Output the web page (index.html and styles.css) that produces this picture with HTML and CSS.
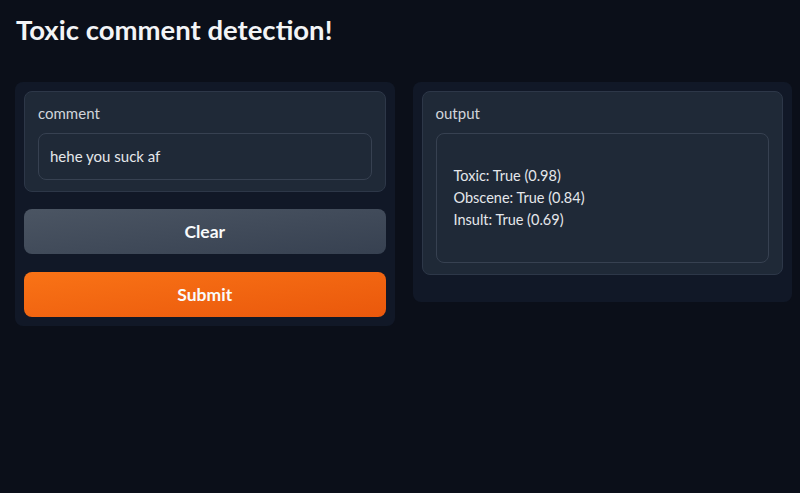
FILE: index.html
```html
<!DOCTYPE html>
<html lang="en">
  <head>
    <meta charset="UTF-8" />
    <title>Toxic comment detection!</title>
    <link rel="stylesheet" href="styles.css">
  </head>
  <body>
    <h1>Toxic comment detection!</h1>

    <div class="row">
      <div class="panel">
        <div class="block">
          <label class="block-label">comment</label>
          <div class="textbox">hehe you suck af</div>
        </div>
        <button class="btn btn-clear">Clear</button>
        <button class="btn btn-submit">Submit</button>
      </div>

      <div class="panel panel-right">
        <div class="block">
          <label class="block-label">output</label>
          <div class="output">
            <p>Toxic: True (0.98)</p>
            <p>Obscene: True (0.84)</p>
            <p>Insult: True (0.69)</p>
          </div>
        </div>
      </div>
    </div>
  </body>
</html>
```

FILE: styles.css
```css
body {
  margin: 0;
  padding: 0 8px 0 15px;
  background: #0b0f19;
  color: #e5e7eb;
  font-family: Lato, "Open Sans", sans-serif;
}
h1 {
  margin: 0;
  padding: 13px 0 0 1px;
  height: 82px;
  box-sizing: border-box;
  font-size: 27.5px;
  font-weight: 700;
  color: #f3f4f6;
}
.row {
  display: flex;
  gap: 18px;
  align-items: flex-start;
}
.panel {
  flex: 1;
  background: #111827;
  border-radius: 8px;
  padding: 9px;
  display: flex;
  flex-direction: column;
  gap: 17px;
}
.panel-right {
  padding-bottom: 27px;
}
.block {
  background: #1f2937;
  border: 1px solid #2d3748;
  border-radius: 8px;
  padding: 12px 13px 11px;
}
.block-label {
  display: block;
  font-size: 15px;
  line-height: 18px;
  color: #d1d5db;
  margin-bottom: 11px;
}
.textbox {
  border: 1px solid #374151;
  border-radius: 8px;
  background: #1f2937;
  padding: 13px 11px;
  height: 47px;
  box-sizing: border-box;
  font-size: 15px;
  line-height: 19px;
}
.output {
  border: 1px solid #374151;
  border-radius: 8px;
  padding: 31px 17px 32px;
  height: 130px;
  box-sizing: border-box;
  font-size: 14.5px;
}
.output p {
  margin: 0;
  line-height: 22px;
}
.btn {
  display: block;
  width: 100%;
  height: 45px;
  border: none;
  border-radius: 8px;
  font-family: inherit;
  font-size: 17.5px;
  font-weight: 700;
  color: #f9fafb;
}
.btn-clear {
  background: linear-gradient(to bottom right, #4b5563, #374151);
}
.btn-submit {
  margin-top: 1px;
  background: linear-gradient(to bottom right, #f97316, #ea580c);
}
```
